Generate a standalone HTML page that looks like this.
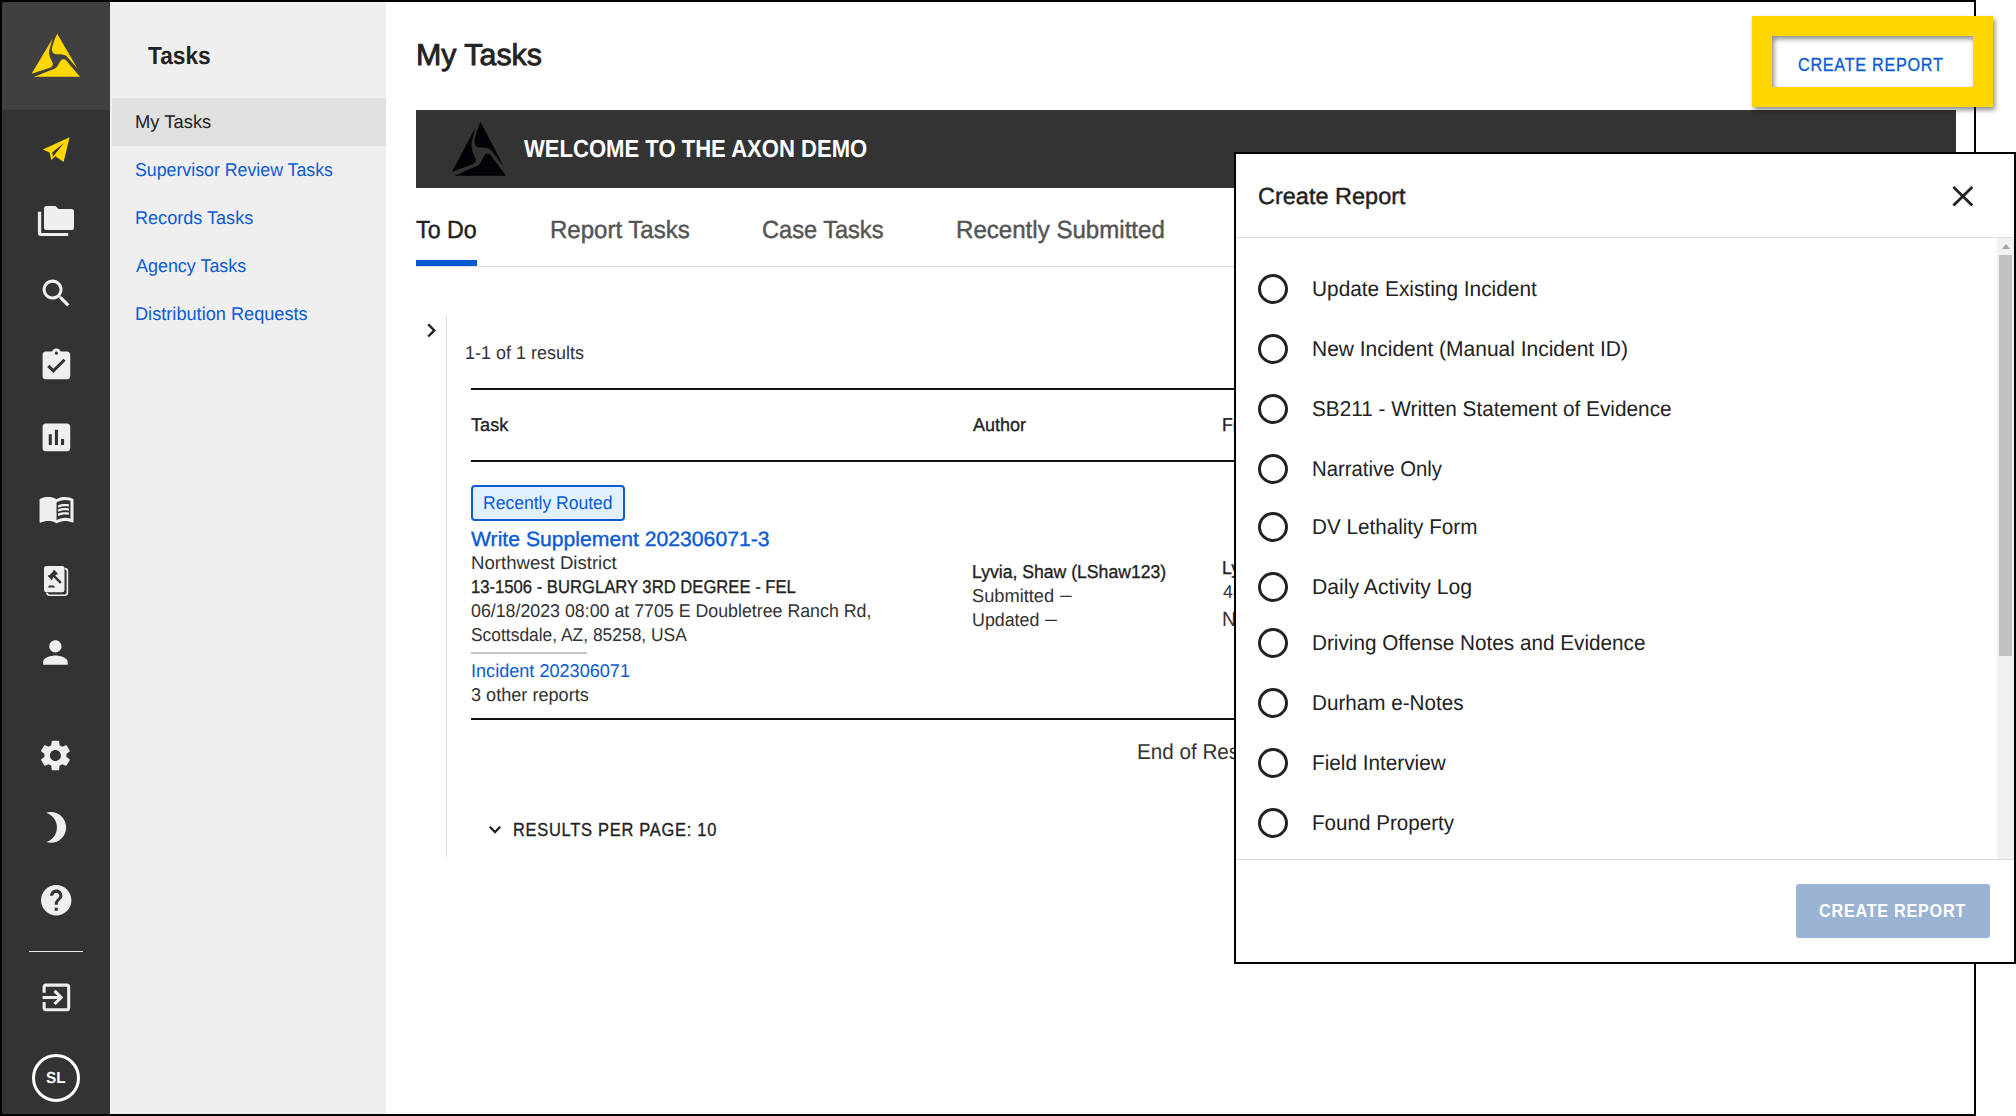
<!DOCTYPE html>
<html lang="en">
<head>
<meta charset="utf-8">
<title>My Tasks - Create Report</title>
<style>
*{box-sizing:border-box;margin:0;padding:0}
html,body{width:2016px;height:1116px;overflow:hidden;background:#fff}
body{position:relative;font-family:"Liberation Sans",sans-serif;color:#333;text-rendering:geometricPrecision}
a{text-decoration:none}
button{border:0;background:none;font-family:inherit;text-align:left}
.sec{display:block}
.abs{position:absolute}
.t{position:absolute;white-space:pre;line-height:1;display:block;transform-origin:0 0}
#frame{position:absolute;left:0;top:0;width:1976px;height:1116px;border:2px solid #000;z-index:10;pointer-events:none}
#rail{position:absolute;left:2px;top:2px;width:108px;height:1112px;background:#333}
#railtop{position:absolute;left:0;top:0;width:108px;height:108px;background:#404040}
#nav{position:absolute;left:110px;top:2px;width:276px;height:1112px;background:#efefef}
#navsel{position:absolute;left:2px;top:96px;width:274px;height:48px;background:#e0e0e0}
#banner{position:absolute;left:416px;top:110px;width:1540px;height:78px;background:#333}
#tabline{position:absolute;left:416px;top:266px;width:1558px;height:1px;background:#dcdcdc}
#tabbar{position:absolute;left:416px;top:260px;width:61px;height:6px;background:#0759d1}
#vline{position:absolute;left:446px;top:315px;width:1px;height:542px;background:#dcdcdc}
.hl{position:absolute;left:471px;width:770px;height:2px;background:#111}
#badge{position:absolute;left:471px;top:485px;width:154px;height:36px;border:2px solid #0b5bd3;border-radius:4px;background:#e1f1fd}
#sep{position:absolute;left:471px;top:652px;width:116px;height:2px;background:#c6c6c6}
#hi{position:absolute;left:1752px;top:16px;width:241px;height:91px;border:20px solid #ffd600;z-index:30;box-shadow:2px 3px 5px rgba(0,0,0,.45), inset 2px 3px 5px rgba(0,0,0,.45)}
#hibg{position:absolute;left:1772px;top:36px;width:201px;height:51px;background:#fff;z-index:29}
#panel{position:absolute;left:1234px;top:152px;width:782px;height:812px;border:2px solid #000;background:#fff;z-index:20}
#phead{position:absolute;left:0;top:83px;width:778px;height:1px;background:#dcdcdc}
#pfoot{position:absolute;left:0;top:705px;width:778px;height:1px;background:#dcdcdc}
#strack{position:absolute;left:761px;top:84px;width:17px;height:621px;background:#f1f1f1}
#sthumb{position:absolute;left:2px;top:17px;width:13px;height:401px;background:#c1c1c1}
#sarrow{position:absolute;left:4.5px;top:6px;width:0;height:0;border-left:4.5px solid transparent;border-right:4.5px solid transparent;border-bottom:5px solid #a3a3a3}
.radio{position:absolute;left:22px;width:30px;height:30px;border:3px solid #222;border-radius:50%}
#pbtn{position:absolute;left:560px;top:730px;width:194px;height:54px;border-radius:3px;background:#9ab3d3}
svg{position:absolute;overflow:visible}
</style>
</head>
<body>
<aside class="sec" aria-label="Primary navigation">
<div id="rail"><div id="railtop"></div></div>
<svg style="left:0;top:0" width="10" height="10"><g transform="translate(26,26) scale(1,1)" fill="#ffd700"><path d="M31.2,7.8 L51.6,42.7 C47.5,38.5 43.5,33.5 40.9,30.6 C38.5,28.2 35,28.3 30.1,28.2 C27,28 26,26 25.8,23.1 C26.5,19 29,12 31.2,7.8 Z"/><path d="M26.6,12.4 L5.6,47.8 L24.7,41.4 C26.5,40.5 27.2,39 26.9,37.6 C26,35 24.2,32.5 23.6,30 C22.8,26.5 23.2,24 23.7,22.6 Z"/><path d="M8.1,50.8 L54,50.8 L39.8,33.9 C38.8,32.9 36.5,32.7 34.9,34.4 C33.5,36 33,37.5 32.3,38.7 C31.5,40.2 30.3,41.7 29,42.5 C27.5,43.3 14,48.5 8.1,50.8 Z"/></g></svg>
<svg style="left:0;top:0" width="10" height="10"><path fill="#ffd700" fill-rule="evenodd" d="M69.6,137.3 L42.8,149.4 L49.6,152.4 L51.2,160.1 L55.4,156.2 L63.6,162 Z M52.2,152.6 L64,143 L52.9,156.8 Z"/></svg>
<svg style="left:0;top:0" width="10" height="10"><path fill="#efefef" d="M46.6,206 H55.4 L58.6,209 H71.4 a2.6,2.6 0 0 1 2.6,2.6 V227.4 a2.6,2.6 0 0 1 -2.6,2.6 H46.6 a2.6,2.6 0 0 1 -2.6,-2.6 V208.6 a2.6,2.6 0 0 1 2.6,-2.600 Z M37.9,211.8 H41.2 V233 H68.2 V236 H40.9 a3,3 0 0 1 -3,-3 Z"/></svg>
<svg style="left:37.58px;top:274.58px" width="36.84" height="36.84" viewBox="0 0 24 24"><path fill="#efefef"  d="M15.5 14h-.79l-.28-.27C15.41 12.59 16 11.11 16 9.5 16 5.91 13.09 3 9.5 3S3 5.91 3 9.5 5.91 16 9.5 16c1.61 0 3.09-.59 4.23-1.57l.27.28v.79l5 4.99L20.49 19l-4.99-5zm-6 0C7.01 14 5 11.99 5 9.5S7.01 5 9.5 5 14 7.01 14 9.5 11.99 14 9.5 14z"/></svg>
<svg style="left:37.58px;top:346.68px" width="36.84" height="36.84" viewBox="0 0 24 24"><path fill="#efefef"  d="M19 3h-4.18C14.4 1.84 13.3 1 12 1c-1.3 0-2.4.84-2.82 2H5c-1.1 0-2 .9-2 2v14c0 1.1.9 2 2 2h14c1.1 0 2-.9 2-2V5c0-1.1-.9-2-2-2zm-7 0c.55 0 1 .45 1 1s-.45 1-1 1-1-.45-1-1 .45-1 1-1zm-2 14l-4-4 1.41-1.41L10 14.17l6.59-6.59L18 9l-8 8z"/></svg>
<svg style="left:37.58px;top:418.58px" width="36.84" height="36.84" viewBox="0 0 24 24"><path fill="#efefef"  d="M19 3H5c-1.1 0-2 .9-2 2v14c0 1.1.9 2 2 2h14c1.1 0 2-.9 2-2V5c0-1.1-.9-2-2-2zM9 17H7v-7h2v7zm4 0h-2V7h2v10zm4 0h-2v-4h2v4z"/></svg>
<svg style="left:37.56px;top:490.26px" width="37.08" height="37.08" viewBox="0 0 24 24"><path fill="#efefef"  d="M21 5c-1.11-.35-2.33-.5-3.5-.5-1.95 0-4.05.4-5.5 1.5-1.45-1.1-3.55-1.500-5.500-1.500S2.450 4.900 1 6v14.650c0 .25.250.5.5.5.1 0 .15-.05.25-.05C3.100 20.450 5.050 20 6.500 20c1.950 0 4.050.4 5.500 1.500 1.350-.85 3.800-1.500 5.500-1.500 1.650 0 3.350.3 4.750 1.050.1.050.15.050.25.050.25 0 .5-.25.5-.5V6c-.6-.45-1.250-.75-2-1zm0 13.500c-1.100-.35-2.300-.5-3.500-.5-1.700 0-4.150.65-5.500 1.500V8c1.350-.85 3.800-1.500 5.500-1.500 1.200 0 2.400.15 3.500.5v11.500z M17.500 10.500c.88 0 1.730.09 2.500.26V9.240c-.79-.15-1.640-.24-2.500-.24-1.700 0-3.240.29-4.500.83v1.660c1.130-.64 2.700-.99 4.500-.99zM13 12.490v1.660c1.130-.64 2.700-.99 4.500-.99.88 0 1.730.09 2.500.26V11.900c-.79-.15-1.640-.24-2.500-.24-1.700 0-3.240.3-4.500.83zM17.500 14.330c-1.700 0-3.240.29-4.500.83v1.660c1.130-.64 2.700-.99 4.500-.99.88 0 1.730.09 2.500.26v-1.520c-.79-.16-1.640-.24-2.500-.24z"/></svg>
<svg style="left:0;top:0" width="10" height="10">
<rect x="46.9" y="568.6" width="20.5" height="26.6" rx="2.6" fill="none" stroke="#efefef" stroke-width="1.6"/>
<rect x="43.4" y="565.4" width="21.6" height="27.4" rx="2.4" fill="#333"/>
<rect x="44" y="566" width="20.5" height="26.3" rx="2.2" fill="#efefef"/>
<g fill="#333"><g transform="translate(52.9,574.9) rotate(-45)"><rect x="-3.5" y="-2.2" width="7" height="4.4"/><rect x="-4.5" y="-3" width="1.4" height="6" rx="0.5"/><rect x="3.1" y="-3" width="1.4" height="6" rx="0.5"/></g>
<g transform="translate(54.2,576.2) rotate(45)"><rect x="0" y="-1.2" width="9.6" height="2.4" rx="1"/></g>
<path d="M47.7,587.4 L49.2,585.4 L53.7,585.4 L55.2,587.4 Z"/></g></svg>
<svg style="left:37.28px;top:634.18px" width="36.84" height="36.84" viewBox="0 0 24 24"><path fill="#efefef"  d="M12 12c2.21 0 4-1.79 4-4s-1.79-4-4-4-4 1.79-4 4 1.79 4 4 4zm0 2c-2.67 0-8 1.34-8 4v2h16v-2c0-2.66-5.33-4-8-4z"/></svg>
<svg style="left:37.18px;top:737.18px" width="36.84" height="36.84" viewBox="0 0 24 24"><path fill="#efefef"  d="M19.14 12.94c.04-.3.06-.61.06-.94 0-.32-.02-.64-.07-.94l2.03-1.58c.18-.14.23-.41.12-.61l-1.92-3.32c-.12-.22-.37-.29-.59-.22l-2.39.96c-.5-.38-1.03-.7-1.62-.94l-.36-2.54c-.04-.24-.24-.41-.48-.41h-3.84c-.24 0-.43.17-.47.41l-.36 2.54c-.59.24-1.13.57-1.62.94l-2.39-.96c-.22-.08-.47 0-.59.22L2.74 8.87c-.12.21-.08.47.12.61l2.03 1.58c-.05.3-.09.63-.09.94s.02.64.07.94l-2.03 1.58c-.18.14-.23.41-.12.61l1.92 3.32c.12.22.37.29.59.22l2.39-.96c.5.38 1.03.7 1.62.94l.36 2.54c.05.24.24.41.48.41h3.84c.24 0 .44-.17.47-.41l.36-2.54c.59-.24 1.13-.56 1.62-.94l2.39.96c.22.08.47 0 .59-.22l1.92-3.32c.12-.22.07-.47-.12-.61l-2.01-1.58zM12 15.6c-1.98 0-3.6-1.62-3.6-3.6s1.62-3.6 3.6-3.6 3.6 1.62 3.6 3.6-1.62 3.6-3.6 3.6z"/></svg>
<svg style="left:36.98px;top:809.38px" width="36.84" height="36.84" viewBox="0 0 24 24"><path fill="#efefef"  d="M9 2c-1.05 0-2.05.16-3 .46 4.06 1.27 7 5.06 7 9.54 0 4.480-2.940 8.270-7 9.540.95.3 1.950.46 3 .46 5.520 0 10-4.480 10-10S14.520 2 9 2z"/></svg>
<svg style="left:37.76px;top:881.76px" width="36.48" height="36.48" viewBox="0 0 24 24"><path fill="#efefef"  d="M12 2C6.48 2 2 6.48 2 12s4.48 10 10 10 10-4.48 10-10S17.52 2 12 2zm1 17h-2v-2h2v2zm2.07-7.75l-.9.92C13.45 12.9 13 13.5 13 15h-2v-.5c0-1.1.45-2.1 1.17-2.83l1.24-1.26c.37-.36.59-.86.59-1.41 0-1.1-.9-2-2-2s-2 .9-2 2H8c0-2.21 1.79-4 4-4s4 1.79 4 4c0 .88-.36 1.68-.93 2.25z"/></svg>
<div class="abs" style="left:29px;top:951px;width:54px;height:1px;background:#e8e8e8"></div>
<svg style="left:37.58px;top:978.58px" width="36.84" height="36.84" viewBox="0 0 24 24"><path fill="#efefef"  d="M10.09 15.59L11.5 17l5-5-5-5-1.41 1.41L12.67 11H3v2h9.67l-2.58 2.59zM19 3H5c-1.11 0-2 .9-2 2v4h2V5h14v14H5v-4H3v4c0 1.1.89 2 2 2h14c1.1 0 2-.9 2-2V5c0-1.1-.9-2-2-2z"/></svg>
<div class="abs" style="left:32px;top:1054px;width:48px;height:48px;border:3px solid #fff;border-radius:50%"></div>
<span class="t" style="left:45.92px;top:1071px;font-size:15.97px;color:#fff;transform:scaleX(0.9590);font-weight:700;">SL</span>
</aside>
<nav class="sec" aria-label="Tasks">
<div id="nav"><div id="navsel"></div></div>
<h2 class="t" style="left:147.77px;top:45px;font-size:24.73px;color:#222;transform:scaleX(0.9179);font-weight:700;">Tasks</h2>
<a class="t" aria-current="page" style="left:134.71px;top:113px;font-size:18.55px;color:#222;transform:scaleX(0.9926);font-weight:400;">My Tasks</a>
<a class="t" style="left:135.14px;top:161px;font-size:18.55px;color:#0b5bd3;transform:scaleX(0.9580);font-weight:400;">Supervisor Review Tasks</a>
<a class="t" style="left:134.64px;top:209px;font-size:18.55px;color:#0b5bd3;transform:scaleX(0.9756);font-weight:400;">Records Tasks</a>
<a class="t" style="left:136.10px;top:257px;font-size:18.55px;color:#0b5bd3;transform:scaleX(0.9669);font-weight:400;">Agency Tasks</a>
<a class="t" style="left:134.63px;top:305px;font-size:18.55px;color:#0b5bd3;transform:scaleX(0.9805);font-weight:400;">Distribution Requests</a>
</nav>
<main class="sec">
<div id="banner"></div>
<div id="tabline"></div><div id="tabbar"></div>
<div id="vline"></div>
<div class="hl" style="top:388px"></div>
<div class="hl" style="top:460px"></div>
<div class="hl" style="top:718px"></div>
<div id="badge"></div>
<div id="sep"></div>
<svg style="left:0;top:0" width="10" height="10"><g transform="translate(445.63919999999996,112.2078) scale(1.118,1.249)" fill="#020207"><path d="M31.2,7.8 L51.6,42.7 C47.5,38.5 43.5,33.5 40.9,30.6 C38.5,28.2 35,28.3 30.1,28.2 C27,28 26,26 25.8,23.1 C26.5,19 29,12 31.2,7.8 Z"/><path d="M26.6,12.4 L5.6,47.8 L24.7,41.4 C26.5,40.5 27.2,39 26.9,37.6 C26,35 24.2,32.5 23.6,30 C22.8,26.5 23.2,24 23.7,22.6 Z"/><path d="M8.1,50.8 L54,50.8 L39.8,33.9 C38.8,32.9 36.5,32.7 34.9,34.4 C33.5,36 33,37.5 32.3,38.7 C31.5,40.2 30.3,41.7 29,42.5 C27.5,43.3 14,48.5 8.1,50.8 Z"/></g></svg>
<svg style="left:0;top:0" width="10" height="10"><path d="M428.2,324.3 L434.3,330.4 L428.2,336.5" fill="none" stroke="#222" stroke-width="2.4"/><path d="M489.8,826.8 L495,832 L500.2,826.8" fill="none" stroke="#222" stroke-width="2.3"/></svg>
<h1 class="t" style="left:415.89px;top:41px;font-size:30.19px;color:#222;transform:scaleX(1.0057);font-weight:400;-webkit-text-stroke:0.85px currentColor;">My Tasks</h1>
<strong class="t" style="left:524.40px;top:138px;font-size:24.73px;color:#fff;transform:scaleX(0.8926);font-weight:700;">WELCOME TO THE AXON DEMO</strong>
<a class="t" role="tab" aria-selected="true" style="left:416.46px;top:219px;font-size:24.73px;color:#222;transform:scaleX(0.9417);font-weight:400;-webkit-text-stroke:0.45px currentColor;">To Do</a>
<a class="t" role="tab" style="left:549.80px;top:219px;font-size:24.73px;color:#555;transform:scaleX(0.9713);font-weight:400;-webkit-text-stroke:0.45px currentColor;">Report Tasks</a>
<a class="t" role="tab" style="left:761.65px;top:219px;font-size:24.73px;color:#555;transform:scaleX(0.9538);font-weight:400;-webkit-text-stroke:0.45px currentColor;">Case Tasks</a>
<a class="t" role="tab" style="left:956.20px;top:219px;font-size:24.73px;color:#555;transform:scaleX(0.9742);font-weight:400;-webkit-text-stroke:0.45px currentColor;">Recently Submitted</a>
<span class="t" style="left:465.24px;top:344px;font-size:18.55px;color:#333;transform:scaleX(0.9701);font-weight:400;">1-1 of 1 results</span>
<span class="t" role="columnheader" style="left:471.16px;top:416px;font-size:18.55px;color:#222;transform:scaleX(0.9789);font-weight:400;-webkit-text-stroke:0.33px currentColor;">Task</span>
<span class="t" role="columnheader" style="left:973.14px;top:416px;font-size:18.55px;color:#222;transform:scaleX(0.9717);font-weight:400;-webkit-text-stroke:0.33px currentColor;">Author</span>
<span class="t" role="columnheader" style="left:1222.11px;top:416px;font-size:18.55px;color:#222;transform:scaleX(0.9550);font-weight:400;-webkit-text-stroke:0.33px currentColor;width:12.8px;overflow:hidden;">From</span>
<span class="t" style="left:483.08px;top:494px;font-size:18.55px;color:#0b5bd3;transform:scaleX(0.9460);font-weight:400;">Recently Routed</span>
<a class="t" style="left:471.30px;top:530px;font-size:20.61px;color:#0b5bd3;transform:scaleX(1.0272);font-weight:400;-webkit-text-stroke:0.37px currentColor;">Write Supplement 202306071-3</a>
<span class="t" style="left:470.89px;top:554px;font-size:18.55px;color:#333;transform:scaleX(1.0035);font-weight:400;">Northwest District</span>
<span class="t" style="left:471.48px;top:578px;font-size:18.55px;color:#222;transform:scaleX(0.8977);font-weight:400;-webkit-text-stroke:0.33px currentColor;">13-1506 - BURGLARY 3RD DEGREE - FEL</span>
<span class="t" style="left:471.38px;top:602px;font-size:18.55px;color:#333;transform:scaleX(0.9596);font-weight:400;">06/18/2023 08:00 at 7705 E Doubletree Ranch Rd,</span>
<span class="t" style="left:471.16px;top:626px;font-size:18.55px;color:#333;transform:scaleX(0.9395);font-weight:400;">Scottsdale, AZ, 85258, USA</span>
<a class="t" style="left:470.89px;top:662px;font-size:18.55px;color:#0b5bd3;transform:scaleX(0.9766);font-weight:400;">Incident 202306071</a>
<span class="t" style="left:471.37px;top:686px;font-size:18.55px;color:#333;transform:scaleX(0.9773);font-weight:400;">3 other reports</span>
<span class="t" style="left:972.01px;top:563px;font-size:18.55px;color:#222;transform:scaleX(0.9505);font-weight:400;-webkit-text-stroke:0.33px currentColor;">Lyvia, Shaw (LShaw123)</span>
<span class="t" style="left:972.22px;top:587px;font-size:18.55px;color:#333;transform:scaleX(0.9846);font-weight:400;">Submitted</span>
<span class="t" style="left:1060.00px;top:586px;font-size:18.55px;color:#333;transform:scaleX(0.6270);font-weight:400;">—</span>
<span class="t" style="left:971.76px;top:611px;font-size:18.55px;color:#333;transform:scaleX(0.9621);font-weight:400;">Updated</span>
<span class="t" style="left:1044.90px;top:610px;font-size:18.55px;color:#333;transform:scaleX(0.6378);font-weight:400;">—</span>
<span class="t" style="left:1222.11px;top:559px;font-size:18.55px;color:#222;transform:scaleX(0.9550);font-weight:400;-webkit-text-stroke:0.33px currentColor;width:12.8px;overflow:hidden;">Lyvia, Shaw</span>
<span class="t" style="left:1222.82px;top:583px;font-size:18.55px;color:#333;transform:scaleX(0.9550);font-weight:400;width:12.0px;overflow:hidden;">4(</span>
<span class="t" style="left:1221.63px;top:610px;font-size:20.61px;color:#333;transform:scaleX(0.9550);font-weight:400;width:13.3px;overflow:hidden;">No</span>
<span class="t" style="left:1136.93px;top:741px;font-size:21.64px;color:#333;transform:scaleX(0.9550);font-weight:400;width:102.3px;overflow:hidden;">End of Results</span>
<button class="t" style="left:513.29px;top:821px;font-size:18.55px;color:#222;transform:scaleX(0.8890);font-weight:400;-webkit-text-stroke:0.33px currentColor;letter-spacing:0.8px;">RESULTS PER PAGE: 10</button>
</main>
<div id="frame"></div>
<div id="hibg"></div>
<div id="hi">
<button class="t" style="left:25.54px;top:20px;font-size:18.55px;color:#0b5bd3;transform:scaleX(0.8754);font-weight:400;-webkit-text-stroke:0.33px currentColor;letter-spacing:0.8px;">CREATE REPORT</button>
</div>
<section id="panel" role="dialog" aria-label="Create Report">
  <div id="phead"></div>
  <div id="strack"><div id="sarrow"></div><div id="sthumb"></div></div>
  <div id="pfoot"></div>
  <div class="radio" style="top:120px"></div>
<div class="radio" style="top:180px"></div>
<div class="radio" style="top:240px"></div>
<div class="radio" style="top:300px"></div>
<div class="radio" style="top:358px"></div>
<div class="radio" style="top:418px"></div>
<div class="radio" style="top:474px"></div>
<div class="radio" style="top:534px"></div>
<div class="radio" style="top:594px"></div>
<div class="radio" style="top:654px"></div>
  <div id="pbtn"></div>
  <svg style="left:716px;top:31.6px" width="24" height="24" viewBox="0 0 24 24"><path d="M1.4 1 L20.3 19.6 M20.3 1 L1.4 19.6" stroke="#222" stroke-width="2.8" fill="none"/></svg>
<h2 class="t" style="left:22.39px;top:31px;font-size:23.29px;color:#222;transform:scaleX(1.0093);font-weight:400;-webkit-text-stroke:0.42px currentColor;">Create Report</h2>
<label class="t" style="left:75.50px;top:125px;font-size:21.43px;color:#222;transform:scaleX(0.9729);font-weight:400;">Update Existing Incident</label>
<label class="t" style="left:75.79px;top:185px;font-size:21.43px;color:#222;transform:scaleX(0.9793);font-weight:400;">New Incident (Manual Incident ID)</label>
<label class="t" style="left:75.63px;top:245px;font-size:21.43px;color:#222;transform:scaleX(0.9700);font-weight:400;">SB211 - Written Statement of Evidence</label>
<label class="t" style="left:75.84px;top:305px;font-size:21.43px;color:#222;transform:scaleX(0.9496);font-weight:400;">Narrative Only</label>
<label class="t" style="left:75.81px;top:363px;font-size:21.43px;color:#222;transform:scaleX(0.9646);font-weight:400;">DV Lethality Form</label>
<label class="t" style="left:75.77px;top:423px;font-size:21.43px;color:#222;transform:scaleX(0.9890);font-weight:400;">Daily Activity Log</label>
<label class="t" style="left:75.81px;top:479px;font-size:21.43px;color:#222;transform:scaleX(0.9668);font-weight:400;">Driving Offense Notes and Evidence</label>
<label class="t" style="left:75.81px;top:539px;font-size:21.43px;color:#222;transform:scaleX(0.9644);font-weight:400;">Durham e-Notes</label>
<label class="t" style="left:75.81px;top:599px;font-size:21.43px;color:#222;transform:scaleX(0.9681);font-weight:400;">Field Interview</label>
<label class="t" style="left:75.82px;top:659px;font-size:21.43px;color:#222;transform:scaleX(0.9619);font-weight:400;">Found Property</label>
<button class="t" disabled style="left:583.04px;top:748px;font-size:18.55px;color:#fff;transform:scaleX(0.8772);font-weight:700;letter-spacing:0.8px;">CREATE REPORT</button>
</section>
</body>
</html>
